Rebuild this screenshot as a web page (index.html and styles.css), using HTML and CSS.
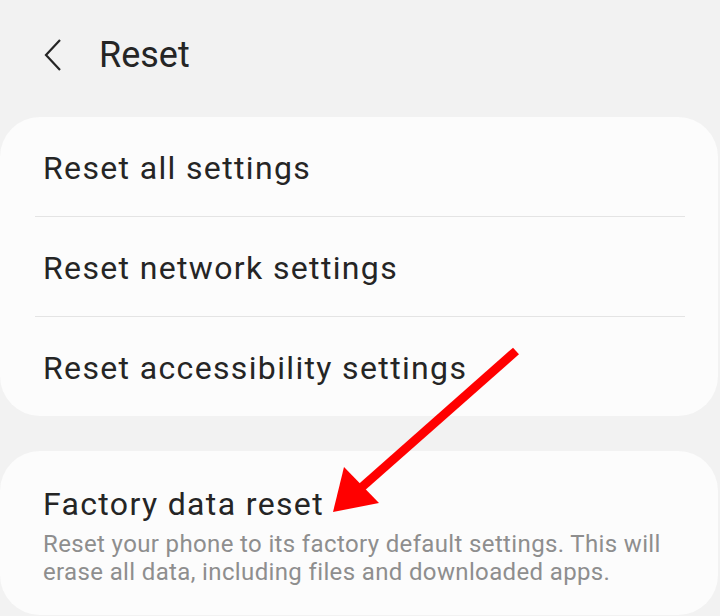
FILE: index.html
```html
<!DOCTYPE html>
<html lang="en">
<head>
    <meta charset="UTF-8">
    <meta name="viewport" content="width=device-width, initial-scale=1.0">
    <title>Reset</title>
    <link rel="stylesheet" href="styles.css">
</head>
<body>
    <div class="cabecera">
        <svg class="atras" width="20" height="34" viewBox="0 0 20 34">
            <polyline points="16,2 2,17 16,32" fill="none" stroke="#252525" stroke-width="2.2"/>
        </svg>
        <h1>Reset</h1>
    </div>

    <div class="tarjeta">
        <div class="opcion">Reset all settings</div>
        <div class="opcion">Reset network settings</div>
        <div class="opcion">Reset accessibility settings</div>
    </div>

    <div class="tarjeta tarjeta-fabrica">
        <div class="opcion">
            Factory data reset
            <p class="detalle">Reset your phone to its factory default settings. This will erase all data, including files and downloaded apps.</p>
        </div>
    </div>

    <!-- flecha roja encima del contenido -->
    <svg class="flecha" width="720" height="616" viewBox="0 0 720 616">
        <line x1="516" y1="351" x2="362" y2="487" stroke="#ff0000" stroke-width="9"/>
        <polygon points="344,467 379,503 333,512" fill="#ff0000"/>
    </svg>
</body>
</html>
```

FILE: styles.css
```css
body {
    font-family: Roboto, "Liberation Sans", sans-serif;
    background-color: #f2f2f2;
    color: #252525;
    margin: 0;
    width: 720px;
    height: 616px;
    overflow: hidden;
    position: relative;
}

.cabecera {
    display: flex;
    align-items: center;
    height: 117px;
    padding-left: 44px;
    box-sizing: border-box;
    padding-bottom: 7px;
}

.cabecera h1 {
    font-size: 36px;
    font-weight: 400;
    margin: 0 0 0 35px;
    line-height: 42px;
}

.atras {
    display: block;
}

.tarjeta {
    background-color: #fcfcfc;
    border-radius: 40px;
    margin-right: 2px;
    padding: 0 33px 0 35px;
}

.opcion {
    font-size: 32px;
    line-height: 38px;
    letter-spacing: 1.35px;
    padding: 32px 0 29px 8px;
    border-bottom: 1px solid #e4e4e4;
}

.opcion:last-child {
    border-bottom: none;
}

.tarjeta-fabrica {
    margin-top: 35px;
}

.tarjeta-fabrica .opcion {
    padding: 34px 10px 29px 8px;
}

.detalle {
    font-size: 24px;
    line-height: 28px;
    letter-spacing: 0.36px;
    color: #8e8e8e;
    margin: 7px 0 0 0;
}

.flecha {
    position: absolute;
    top: 0;
    left: 0;
    pointer-events: none;
}
```
